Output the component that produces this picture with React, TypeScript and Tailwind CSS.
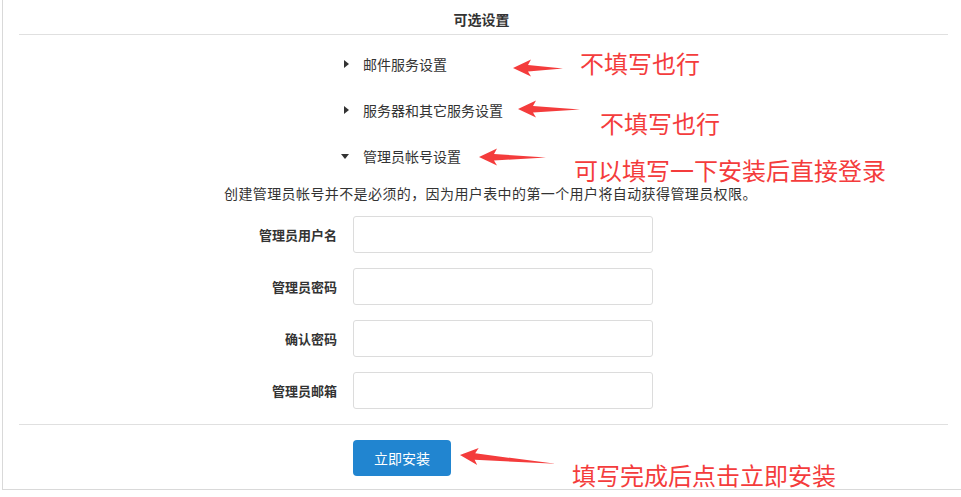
/**
 * 安装向导 - 可选设置
 */

function RightCaret() {
  return (
    <svg width="5" height="8" viewBox="0 0 5 8" className="shrink-0">
      <polygon points="0,0 5,4 0,8" fill="#333" />
    </svg>
  );
}

function DownCaret() {
  return (
    <svg width="8" height="5" viewBox="0 0 8 5" className="shrink-0">
      <polygon points="0,0 8,0 4,5" fill="#333" />
    </svg>
  );
}

// red hand-drawn annotation arrow, pointing left
function Arrow({ length, tilt = 0 }: { length: number; tilt?: number }) {
  return (
    <svg width={length} height="18" viewBox={`0 0 ${length} 18`} style={{ transform: `rotate(${tilt}deg)`, transformOrigin: "0 9px" }}>
      <polygon
        points={`0,9 18,0.5 15,6 ${length},9.5 15,12.5 18,17.5`}
        fill="#f43c3c"
      />
    </svg>
  );
}

const fields = ["管理员用户名", "管理员密码", "确认密码", "管理员邮箱"];

export default function App() {
  return (
    <div className="relative h-[497px] w-[961px] overflow-hidden bg-white font-['Noto_Sans_CJK_SC',sans-serif] text-[#333]">
      <div className="ml-[2px] w-[970px] border-l border-b border-[#d9d9d9] px-[16px] pb-[13px]">
        {/* 标题 */}
        <div className="flex h-[34px] items-center justify-center pt-[4px] pr-[12px] text-[14px] font-bold">
          可选设置
        </div>
        <div className="w-[929px] border-t border-[#e0e0e0]" />

        {/* 折叠项 */}
        <div className="mt-[6px] ml-[325px]">
          <div className="flex h-[46px] items-center gap-[14px] text-[14px]">
            <RightCaret />
            <span>邮件服务设置</span>
          </div>
          <div className="flex h-[46px] items-center gap-[14px] text-[14px]">
            <RightCaret />
            <span>服务器和其它服务设置</span>
          </div>
          <div className="-ml-[3px] flex h-[46px] items-center gap-[14px] text-[14px]">
            <DownCaret />
            <span>管理员帐号设置</span>
          </div>
        </div>

        <div className="mt-[1px] flex h-[26px] items-center pl-[205px] text-[14px] tracking-[0.4px]">
          创建管理员帐号并不是必须的，因为用户表中的第一个用户将自动获得管理员权限。
        </div>

        {/* 表单 */}
        <div className="mt-[10px] flex flex-col gap-[15px]">
          {fields.map((f) => (
            <div key={f} className="flex items-center gap-[16px]">
              <label className="w-[318px] text-right text-[13px] font-bold">{f}</label>
              <input
                type="text"
                className="h-[37px] w-[300px] rounded-[3px] border border-[#dcdcdc] bg-white px-2 text-[13px] outline-none"
              />
            </div>
          ))}
        </div>

        <div className="mt-[15px] w-[929px] border-t border-[#e0e0e0]" />

        <div className="mt-[15px] pl-[334px]">
          <button className="h-[36px] w-[98px] rounded-[4px] bg-[#2185d0] text-[14px] text-white">
            立即安装
          </button>
        </div>
      </div>

      {/* 标注 */}
      <div className="absolute left-[513px] top-[59px]">
        <Arrow length={50} />
      </div>
      <div className="absolute left-[580px] top-[51px] text-[24px] leading-[24px] text-[#f43c3c]">
        不填写也行
      </div>

      <div className="absolute left-[518px] top-[100px]">
        <Arrow length={62} />
      </div>
      <div className="absolute left-[600px] top-[111px] text-[24px] leading-[24px] text-[#f43c3c]">
        不填写也行
      </div>

      <div className="absolute left-[479px] top-[148px]">
        <Arrow length={67} />
      </div>
      <div className="absolute left-[574px] top-[158px] text-[24px] leading-[24px] text-[#f43c3c]">
        可以填写一下安装后直接登录
      </div>

      <div className="absolute left-[460px] top-[446px]">
        <Arrow length={96} tilt={5} />
      </div>
      <div className="absolute left-[572px] top-[463px] text-[24px] leading-[24px] text-[#f43c3c]">
        填写完成后点击立即安装
      </div>
    </div>
  );
}
